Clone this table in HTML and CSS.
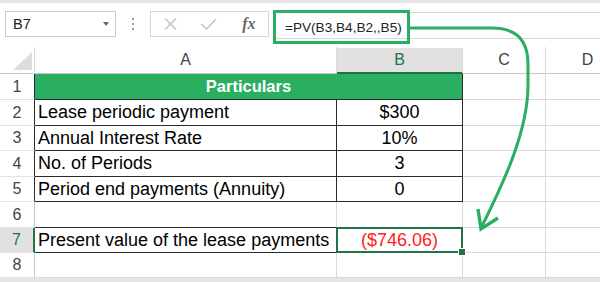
FILE: index.html
```html
<!DOCTYPE html>
<html>
<head>
<meta charset="utf-8">
<link rel="stylesheet" href="styles.css">
</head>
<body>
<div class="app">
  <div class="topband"></div>
  <div class="fbar">
    <div class="namebox"><span>B7</span><span class="caret"></span></div>
    <div class="grip"><i></i><i></i><i></i></div>
    <div class="btns">
      <span class="slot"><svg width="13" height="12" viewBox="0 0 13 12"><path d="M1 0.5 L12 11.5 M12 0.5 L1 11.5" stroke="#c4c4c4" stroke-width="1.5" fill="none"/></svg></span>
      <span class="slot"><svg width="17" height="12" viewBox="0 0 17 12"><path d="M1 6 L6.5 11 L16 1" stroke="#c4c4c4" stroke-width="1.6" fill="none"/></svg></span>
      <span class="slot fx">fx</span>
    </div>
    <div class="input">
      <div class="hl">=PV(B3,B4,B2,,B5)</div>
    </div>
  </div>
  <div class="sheet">
    <div class="c hdr corner"><svg width="34" height="26" viewBox="0 0 34 26"><polygon points="32,5 32,23 13,23" fill="#dcdcdc"/></svg></div>
    <div class="c hdr col">A</div>
    <div class="c hdr col on">B</div>
    <div class="c hdr col">C</div>
    <div class="c hdr col">D</div>

    <div class="c rh edge">1</div>
    <div class="c title">Particulars</div>
    <div class="c"></div>
    <div class="c"></div>

    <div class="c rh edge">2</div>
    <div class="c t a">Lease periodic payment</div>
    <div class="c t b">$300</div>
    <div class="c"></div>
    <div class="c"></div>

    <div class="c rh edge">3</div>
    <div class="c t a">Annual Interest Rate</div>
    <div class="c t b">10%</div>
    <div class="c"></div>
    <div class="c"></div>

    <div class="c rh edge">4</div>
    <div class="c t a">No. of Periods</div>
    <div class="c t b">3</div>
    <div class="c"></div>
    <div class="c"></div>

    <div class="c rh edge">5</div>
    <div class="c t a">Period end payments (Annuity)</div>
    <div class="c t b">0</div>
    <div class="c"></div>
    <div class="c"></div>

    <div class="c rh">6</div>
    <div class="c dk-b"></div>
    <div class="c dk-b"></div>
    <div class="c"></div>
    <div class="c"></div>

    <div class="c rh sel-row">7</div>
    <div class="c t a">Present value of the lease payments</div>
    <div class="c t b neg sel">($746.06)</div>
    <div class="c"></div>
    <div class="c"></div>

    <div class="c rh">8</div>
    <div class="c"></div>
    <div class="c"></div>
    <div class="c"></div>
    <div class="c"></div>
  </div>
  <div class="bottomband"></div>
  <svg class="arrow" width="600" height="282" viewBox="0 0 600 282">
    <path d="M410 28 L492 28 Q528 28 528 64 L528 85 C528 130 505 180 481 228" stroke="#2aae61" stroke-width="3" fill="none"/>
    <polyline points="478,209 481,229 498,218" stroke="#2aae61" stroke-width="3.4" fill="none" stroke-linejoin="miter"/>
  </svg>
</div>
</body>
</html>
```

FILE: styles.css
```css
* { box-sizing: border-box; }
html, body { margin: 0; padding: 0; background: #fff; }
.app {
  position: relative;
  width: 600px;
  height: 282px;
  overflow: hidden;
  font-family: "Liberation Sans", Arial, sans-serif;
  color: #000;
}
.topband { height: 3px; background: #e4e4e4; }
.fbar {
  height: 44px;
  display: flex;
  align-items: flex-start;
  padding-top: 8px;
}
.namebox {
  margin-left: 5px;
  width: 111px;
  height: 26px;
  border: 1px solid #c9c9c9;
  display: flex;
  align-items: center;
  justify-content: space-between;
  padding: 0 6px 0 7px;
  font-size: 14.5px;
  color: #222;
}
.caret {
  width: 0; height: 0;
  border-left: 3.5px solid transparent;
  border-right: 3.5px solid transparent;
  border-top: 4px solid #666;
}
.grip {
  width: 34px;
  height: 26px;
  display: flex;
  flex-direction: column;
  align-items: center;
  justify-content: center;
  gap: 3px;
}
.grip i { display: block; width: 2px; height: 2px; background: #9a9a9a; }
.btns {
  width: 119px;
  height: 26px;
  border: 1px solid #d6d6d6;
  display: flex;
  align-items: center;
}
.slot { flex: 1; display: flex; justify-content: center; align-items: center; }
.fx {
  font-family: "Liberation Serif", "Times New Roman", serif;
  font-style: italic;
  font-weight: bold;
  font-size: 16px;
  color: #6a6a6a;
  padding-left: 2px;
}
.input {
  position: relative;
  margin-left: 4px;
  flex: 1;
  height: 27px;
  margin-top: 1px;
  border-top: 1px solid #d8d8d8;
  border-bottom: 1px solid #d8d8d8;
}
.hl {
  position: absolute;
  left: 0;
  top: -3px;
  width: 137px;
  height: 34px;
  border: 3px solid #2aae61;
  display: flex;
  align-items: center;
  padding-left: 9px;
  font-size: 13.6px;
  color: #222;
  white-space: nowrap;
}
.sheet {
  display: grid;
  grid-template-columns: 35px 302px 126px 83px 84px;
  grid-template-rows: 27px 26px 26px 25px 26px 25px 26px 25px 25px;
  width: 630px;
}
.c {
  border-right: 1px solid #dadada;
  border-bottom: 1px solid #dadada;
  display: flex;
  align-items: center;
  font-size: 18px;
  white-space: nowrap;
  overflow: visible;
}
.hdr {
  justify-content: center;
  font-size: 16px;
  color: #444;
  border-bottom-color: #c8c8c8;
}
.corner { display: block; padding: 0; }
.corner svg { display: block; }
.col.on {
  background: #e1e1e1;
  color: #217346;
  border-bottom: 2px solid #217346;
  margin-top: 1px;
}
.rh {
  justify-content: center;
  font-size: 16px;
  color: #444;
  border-right-color: #c8c8c8;
  border-bottom-color: #e2e2e2;
}
.rh.edge { border-right-color: #2b2b2b; }
.sel-row {
  background: #e1e1e1;
  color: #217346;
  border-right: 2px solid #217346;
}
.title {
  grid-column: span 2;
  background: #2aae61;
  color: #fff;
  font-weight: bold;
  font-size: 16.5px;
  justify-content: center;
  border-right-color: #2b2b2b;
  border-bottom-color: #2b2b2b;
}
.t { border-right-color: #2b2b2b; border-bottom-color: #2b2b2b; }
.a { padding-left: 3px; }
.b { justify-content: center; }
.dk-b { border-bottom-color: #2b2b2b; }
.neg { color: #ff2020; }
.sel { position: relative; }
.sel::before {
  content: "";
  position: absolute;
  left: -1px; top: -1px; right: -1px; bottom: -1px;
  border: 2px solid #217346;
}
.sel::after {
  content: "";
  position: absolute;
  right: -4px; bottom: -4px;
  width: 6px; height: 6px;
  background: #217346;
  border: 1px solid #fff;
}
.bottomband { height: 4px; background: #e6e6e6; }
.arrow { position: absolute; left: 0; top: 0; pointer-events: none; }
```
